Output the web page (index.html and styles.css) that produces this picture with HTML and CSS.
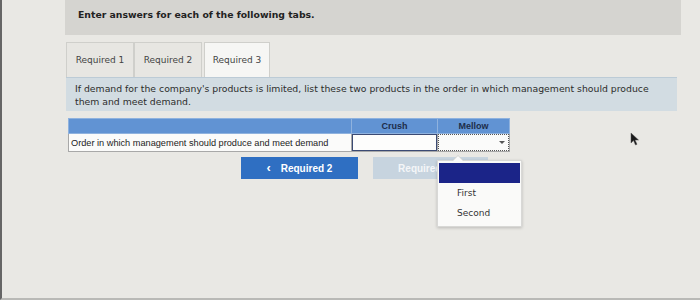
FILE: index.html
```html
<!DOCTYPE html>
<html lang="en">
<head>
    <meta charset="UTF-8">
    <title>Required 3</title>
    <link rel="stylesheet" href="styles.css">
</head>
<body>
    <div class="screen">
        <div class="page">
            <div class="head">Enter answers for each of the following tabs.</div>
            <div class="tabs">
                <div class="tab">Required 1</div>
                <div class="tab">Required 2</div>
                <div class="tab active">Required 3</div>
            </div>
            <div class="info">If demand for the company's products is limited, list these two products in the order in which management should produce them and meet demand.</div>

            <table class="answer">
                <tr class="top">
                    <th class="label-col"></th>
                    <th class="val-col">Crush</th>
                    <th class="val-col2">Mellow</th>
                </tr>
                <tr>
                    <td class="label">Order in which management should produce and meet demand</td>
                    <td class="cell"><div class="input"></div></td>
                    <td class="cell"><div class="select"><span class="caret"></span></div></td>
                </tr>
            </table>

            <div class="buttons">
                <div class="btn prev"><span class="chev">&lsaquo;</span> Required 2</div>
                <div class="btn next">Required 3 <span class="chev">&rsaquo;</span></div>
                <!-- open dropdown of the Mellow cell -->
                <div class="menu">
                    <div class="pick"></div>
                    <div class="opt">First</div>
                    <div class="opt">Second</div>
                </div>
            </div>
        </div>
        <svg class="cursor" width="10" height="14" viewBox="0 0 10 14"><path d="M1 1 L1 11 L3.5 8.5 L5.5 13 L7 12.3 L5 8 L8.5 8 Z" fill="#1a1a1a" stroke="#555" stroke-width="0.5"/></svg>
    </div>
</body>
</html>
```

FILE: styles.css
```css
*,::after,::before{margin:0; box-sizing:border-box;}
body{margin:0; background:#e9e8e4; font-family:"DejaVu Sans", Verdana, sans-serif; color:#333;}
.screen{position:relative; width:700px; height:300px; border-left:2px solid #666; border-bottom:2px solid #b9b9b6; overflow:hidden;}
.page{margin-left:63px; width:616px;}
.head{height:35px; background:#d5d4d0; padding:9px 0 0 13px; font-size:9.3px; font-weight:bold; color:#222;}
.tabs{display:flex; margin-top:7px; padding-left:1px; height:35px;}
.tab{width:68px; height:35px; border:1px solid #cfcfcb; border-bottom:none; background:#e7e6e2; font-size:9px; color:#444; text-align:center; padding-top:12px;}
.tab.active{background:#f6f6f4; width:66px; margin-left:2px;}
.info{margin-left:1px; width:611px; height:34px; background:#d2dce2; border-top:1px solid #bccbd6; padding:4px 9px 0; font-size:9.3px; line-height:13px; color:#2c2c2c;}
.answer{margin:7px 0 0 3px; border-collapse:collapse; font-family:"Liberation Sans", Arial, sans-serif;}
.answer th{background:#6193d3; height:15px; font-size:9px; color:#1d2d4a; font-weight:bold; border:1px solid #8fb2de; padding:0;}
.label-col{width:283px;}
.val-col{width:86px;}
.val-col2{width:72px;}
.answer td{height:17px; background:#fbfbfa; border:1px solid #a8a8a8; padding:0;}
.label{font-size:9.2px; color:#222; padding-left:2px !important;}
.input{height:17px; border:1.5px solid #3b4a73; background:#fdfdfc;}
.select{position:relative; height:17px; border:1px dotted #555; background:#fbfbfa;}
.caret{position:absolute; right:3px; top:6px; border-left:3px solid transparent; border-right:3px solid transparent; border-top:3px solid #555;}
.buttons{position:relative; display:flex; gap:15px; margin:5px 0 0 176px;}
.btn{width:117px; height:22px; font-family:"Liberation Sans", Arial, sans-serif; font-size:10px; font-weight:bold; color:#fff; text-align:center; line-height:22px;}
.btn .chev{font-size:13px; margin-right:7px;}
.prev{background:#2f6fc2;}
.next{background:#c7d4df; color:#f4f6f8; width:115px;}
.next .chev{margin:0 0 0 6px;}
.menu{position:absolute; left:196px; top:3px; width:85px; height:67px; background:#fafaf9; border:1px solid #d8d8d6; box-shadow:0 1px 3px rgba(0,0,0,0.2); padding:2px 0 0; font-size:9px; color:#333;}
.menu::before{content:""; position:absolute; left:14px; top:-6px; border-left:6px solid transparent; border-right:6px solid transparent; border-bottom:6px solid #d3d3d0;}
.menu::after{content:""; position:absolute; left:15px; top:-5px; border-left:5px solid transparent; border-right:5px solid transparent; border-bottom:5px solid #fafaf9;}
.pick{height:20px; margin:0 1px; background:#1b2488;}
.opt{height:20px; line-height:20px; padding-left:19px;}
.cursor{position:absolute; left:628px; top:132px;}
```
